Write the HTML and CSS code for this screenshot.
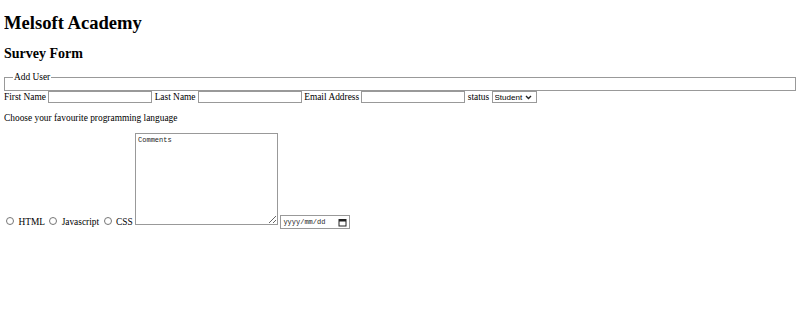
FILE: index.html
```html
<!DOCTYPE html>
<html lang="en">
<head>
    <meta charset="UTF-8">
    <meta name="viewport" content="width=device-width, initial-scale=1.0">
    <title>Melsoft Academy</title>
    <link rel="stylesheet" href="styles.css">
</head>
<body>
    <h1>Melsoft Academy</h1>
    <h3>Survey Form</h3>
    <form>
        <fieldset>
            <legend>Add User</legend>
        </fieldset>
        <label for="fname">First Name</label>
        <input type="text" id="fname" name="fname">
        <label for="lname">Last Name</label>
        <input type="text" id="lname" name="lname">
        <label for="email">Email Address</label>
        <input type="email" id="email" name="email">
        <label for="status">status</label>
        <select id="status" name="status">
            <option>Student</option>
            <option>Teacher</option>
        </select>

        <p>Choose your favourite programming language</p>
        <div class="choices">
            <input type="radio" id="html" name="lang" value="html">
            <label for="html">HTML</label>
            <input type="radio" id="js" name="lang" value="js">
            <label for="js">Javascript</label>
            <input type="radio" id="css" name="lang" value="css">
            <label for="css">CSS</label>
            <textarea name="comments">Comments</textarea>
            <span class="date-field">
                <span class="date-text">yyyy/mm/dd</span>
                <svg class="date-icon" width="9" height="9" viewBox="0 0 9 9">
                    <rect x="1" y="1.5" width="7" height="6.5" fill="none" stroke="#222" stroke-width="1"/>
                    <rect x="1" y="1.5" width="7" height="2" fill="#222"/>
                </svg>
            </span>
        </div>
    </form>
</body>
</html>
```

FILE: styles.css
```css
body {
    font-family: "Liberation Serif", serif;
    font-size: 9.4px;
    margin: 4px;
    color: #000;
}
h1 {
    font-size: 18.6px;
    margin: 8px 0;
}
h3 {
    font-size: 14px;
    margin: 12px 0 10px;
}
fieldset {
    margin: 0;
    padding: 0 8px 8px;
    border: 1px solid #999;
}
legend {
    padding: 0 1px;
}
input[type="text"],
input[type="email"] {
    width: 104px;
    height: 12px;
    box-sizing: border-box;
    border: 1px solid #999;
    padding: 0 2px;
    font-size: 8px;
    vertical-align: baseline;
}
select {
    appearance: none;
    font-family: Arial, sans-serif;
    font-size: 8px;
    width: 45px;
    height: 12px;
    padding: 0 0 0 2px;
    border: 1px solid #999;
    border-radius: 0;
    color: #000;
    background: #fff url("data:image/svg+xml,%3Csvg xmlns='http://www.w3.org/2000/svg' width='7' height='5' viewBox='0 0 7 5'%3E%3Cpath d='M1 1l2.5 2.5L6 1' fill='none' stroke='%23222' stroke-width='1.4'/%3E%3C/svg%3E") no-repeat right 4px center;
}
p {
    margin: 10px 0;
}
input[type="radio"] {
    width: 8px;
    height: 8px;
    margin: 0 2px 0 2.2px;
}
textarea {
    width: 143px;
    height: 92px;
    box-sizing: border-box;
    font-family: "Liberation Mono", monospace;
    font-size: 7px;
    color: #222;
    border: 1px solid #999;
    padding: 2px;
    margin: 0;
    resize: both;
}
.date-field {
    display: inline-flex;
    align-items: center;
    justify-content: space-between;
    width: 70px;
    height: 14px;
    box-sizing: border-box;
    border: 1px solid #999;
    padding: 0 2px;
    vertical-align: 1px;
}
.date-text {
    font-family: "Liberation Mono", monospace;
    font-size: 7px;
    color: #222;
}
```
